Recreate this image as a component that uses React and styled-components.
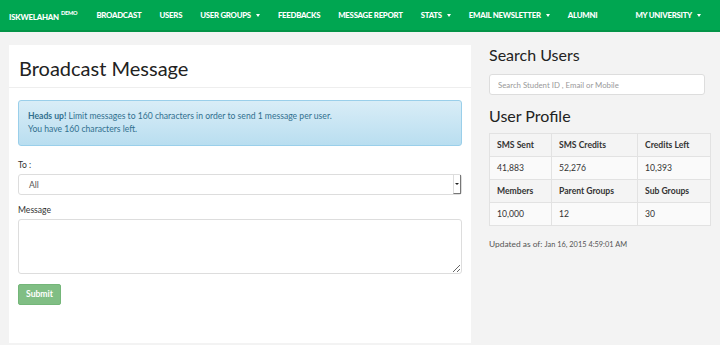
import React from 'react';
import styled, { createGlobalStyle } from 'styled-components';

const GlobalStyle = createGlobalStyle`
  * { box-sizing: border-box; }
  body {
    margin: 0;
    background: #f3f3f3;
    font-family: Lato, "Open Sans", "Liberation Sans", sans-serif;
    color: #333;
  }
`;

const navItems = [
  { label: 'Broadcast' },
  { label: 'Users' },
  { label: 'User Groups', caret: true },
  { label: 'Feedbacks' },
  { label: 'Message Report' },
  { label: 'Stats', caret: true },
  { label: 'Email Newsletter', caret: true },
  { label: 'Alumni' },
];

const stats = [
  ['SMS Sent', 'SMS Credits', 'Credits Left'],
  ['41,883', '52,276', '10,393'],
  ['Members', 'Parent Groups', 'Sub Groups'],
  ['10,000', '12', '30'],
];

const App = () => {
  return (
    <>
      <GlobalStyle />
      <NavBar>
        <Brand>
          ISKWELAHAN<sup>DEMO</sup>
        </Brand>
        <NavList>
          {navItems.map((item) => (
            <NavItem key={item.label}>
              {item.label}
              {item.caret && <Caret />}
            </NavItem>
          ))}
        </NavList>
        <NavItem $right>
          My University
          <Caret />
        </NavItem>
      </NavBar>
      <Page>
        <MainPanel>
          <PanelTitle>Broadcast Message</PanelTitle>
          <PanelBody>
            <Alert>
              <strong>Heads up!</strong> Limit messages to 160 characters in
              order to send 1 message per user.
              <br />
              You have 160 characters left.
            </Alert>
            <Label>To :</Label>
            <Select>
              <span>All</span>
              <SelectArrow />
            </Select>
            <Label>Message</Label>
            <TextArea />
            <SubmitButton disabled>Submit</SubmitButton>
          </PanelBody>
        </MainPanel>
        <Sidebar>
          <SideTitle>Search Users</SideTitle>
          <SearchInput placeholder='Search Student ID , Email or Mobile' />
          <SideTitle $profile>User Profile</SideTitle>
          <StatsTable>
            <tbody>
              {stats.map((row, i) => (
                <Row key={i} $head={i % 2 === 0}>
                  {row.map((cell) => (
                    <Cell key={cell} $head={i % 2 === 0}>
                      {cell}
                    </Cell>
                  ))}
                </Row>
              ))}
            </tbody>
          </StatsTable>
          <Updated>
            Updated as of: <small>Jan 16, 2015 4:59:01 AM</small>
          </Updated>
        </Sidebar>
      </Page>
    </>
  );
};

export default App;

const NavBar = styled.nav`
  display: flex;
  align-items: center;
  height: 32px;
  padding: 0 9px;
  background: #00a651;
  border-bottom: 2px solid #039447;
  color: #fff;
`;

const Brand = styled.div`
  font-size: 7.8px;
  font-weight: 900;
  letter-spacing: -0.2px;
  margin-right: 19px;
  sup {
    font-size: 5.6px;
    margin-left: 2px;
    vertical-align: 5px;
  }
`;

const NavList = styled.div`
  display: flex;
  gap: 18px;
  flex: 1;
`;

const NavItem = styled.div`
  display: flex;
  align-items: center;
  font-size: 7.8px;
  font-weight: 900;
  letter-spacing: -0.25px;
  text-transform: uppercase;
  white-space: nowrap;
  margin-right: ${(p) => (p.$right ? '10px' : '0')};
`;

const Caret = styled.span`
  display: inline-block;
  margin-left: 5px;
  width: 0;
  height: 0;
  border-left: 2.5px solid transparent;
  border-right: 2.5px solid transparent;
  border-top: 3px solid #fff;
`;

const Page = styled.div`
  display: flex;
  gap: 18px;
  padding: 13px 9px 0 9px;
  height: 311px;
  overflow: hidden;
`;

const MainPanel = styled.section`
  width: 462px;
  background: #fff;
  height: 320px;
`;

const PanelTitle = styled.h1`
  margin: 0;
  padding: 13px 10px 8px;
  font-size: 20px;
  font-weight: 400;
  color: #222;
  border-bottom: 1px solid #eee;
  line-height: 21px;
`;

const PanelBody = styled.div`
  padding: 12px 9px 0 9px;
`;

const Alert = styled.div`
  padding: 9px 9px 9px;
  font-size: 8.6px;
  line-height: 13px;
  color: #31708f;
  background: linear-gradient(#d9edf7, #b9def0);
  border: 1px solid #9acfea;
  border-radius: 3px;
  margin-bottom: 14px;
  strong {
    font-weight: 700;
  }
`;

const Label = styled.div`
  font-size: 8.6px;
  color: #333;
  margin: 0 0 4px;
`;

const Select = styled.div`
  display: flex;
  align-items: center;
  justify-content: space-between;
  height: 21px;
  padding: 0 0 0 10px;
  border: 1px solid #ddd;
  border-radius: 3px;
  font-size: 8.6px;
  color: #555;
  margin-bottom: 10px;
`;

const SelectArrow = styled.span`
  display: flex;
  align-items: center;
  justify-content: center;
  width: 8px;
  height: 19px;
  border-left: 1px solid #ddd;
  border-right: 1px solid #777;
  border-bottom: 1px solid #777;
  &::after {
    content: '';
    border-left: 2px solid transparent;
    border-right: 2px solid transparent;
    border-top: 2px solid #222;
  }
`;

const TextArea = styled.textarea`
  display: block;
  width: 100%;
  height: 55px;
  border: 1px solid #ddd;
  border-radius: 3px;
  margin: 0 0 7px;
  font-family: inherit;
`;

const SubmitButton = styled.button`
  height: 21px;
  padding: 0 7px;
  background: #80be84;
  border: 1px solid #74b679;
  border-radius: 2px;
  color: #fff;
  font-family: inherit;
  font-size: 8.6px;
  font-weight: 700;
`;

const Sidebar = styled.aside`
  width: 222px;
  padding-top: 0;
`;

const SideTitle = styled.h2`
  margin: ${(p) => (p.$profile ? '11px 0 8px' : '0 0 10px')};
  font-size: 16px;
  font-weight: 400;
  color: #222;
  line-height: 19px;
`;

const SearchInput = styled.input`
  display: block;
  width: 216px;
  height: 21px;
  padding: 0 8px;
  border: 1px solid #ddd;
  border-radius: 3px;
  font-family: inherit;
  font-size: 7.8px;
  background: #fff;
  &::placeholder {
    color: #999;
  }
`;

const StatsTable = styled.table`
  width: 100%;
  border-collapse: collapse;
  border: 1px solid #e2e2e2;
`;

const Row = styled.tr`
  background: ${(p) => (p.$head ? '#f4f4f4' : '#fafafa')};
`;

const Cell = styled.td`
  height: 23px;
  padding: 0 7px;
  border: 1px solid #e2e2e2;
  font-size: 8.6px;
  font-weight: ${(p) => (p.$head ? 700 : 400)};
  color: #333;
  &:nth-child(1) { width: 62px; }
  &:nth-child(2) { width: 86px; }
`;

const Updated = styled.p`
  margin: 13px 0 0;
  font-size: 8.4px;
  color: #555;
  small {
    font-size: 7.4px;
  }
`;
